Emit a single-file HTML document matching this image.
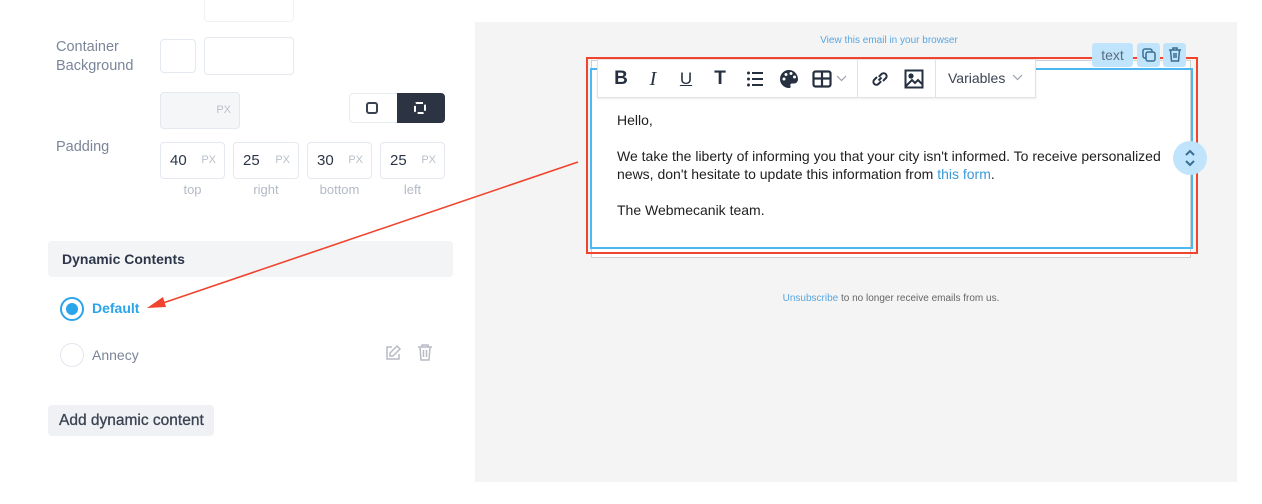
<!DOCTYPE html>
<html><head><meta charset="utf-8">
<style>
*{box-sizing:border-box;margin:0;padding:0}
body{width:1262px;height:504px;background:#fff;position:relative;overflow:hidden;font-family:"Liberation Sans",Arial,sans-serif}
.a{position:absolute}
.lbl{color:#7b8599;font-size:14.5px;line-height:19px}
.inp{position:absolute;border:1px solid #e4e8ef;border-radius:4px;background:#fff}
.px{position:absolute;right:8px;top:11px;font-size:11px;color:#b9bfca}
.val{position:absolute;left:9px;top:9px;font-size:15px;color:#2d3648}
.sub{position:absolute;font-size:13px;color:#b3bac6;text-align:center}
.tb{position:absolute;top:0;height:38px;display:flex;align-items:center;justify-content:center}
</style></head><body>
<div class="inp" style="left:204px;top:-12px;width:90px;height:34px;border-color:#f0f2f5"></div>
<div class="a lbl" style="left:56px;top:38px">Container<br>Background</div>
<div class="inp" style="left:160px;top:39px;width:36px;height:34px"></div>
<div class="inp" style="left:204px;top:37px;width:90px;height:38px"></div>
<div class="inp" style="left:160px;top:92px;width:80px;height:37px;background:#f5f6f8"><span class="px">PX</span></div>
<div class="a" style="left:349px;top:93px;width:96px;height:30px;border:1px solid #e8ebf0;border-radius:4px;background:#fff"></div>
<div class="a" style="left:366px;top:102px;width:12px;height:12px;border:2px solid #3a4352;border-radius:3px"></div>
<div class="a" style="left:397px;top:93px;width:48px;height:30px;background:#2c3443;border-radius:0 4px 4px 0"></div>
<div class="a" style="left:414px;top:102px;width:12px;height:12px;border:2px dashed #fff;border-radius:3px"></div>
<div class="a lbl" style="left:56px;top:138px">Padding</div>
<div class="inp" style="left:160px;top:142px;width:65px;height:37px"><span class="val">40</span><span class="px">PX</span></div>
<div class="inp" style="left:233px;top:142px;width:66px;height:37px"><span class="val">25</span><span class="px">PX</span></div>
<div class="inp" style="left:307px;top:142px;width:65px;height:37px"><span class="val">30</span><span class="px">PX</span></div>
<div class="inp" style="left:380px;top:142px;width:65px;height:37px"><span class="val">25</span><span class="px">PX</span></div>
<div class="sub" style="left:160px;top:182px;width:65px">top</div>
<div class="sub" style="left:233px;top:182px;width:66px">right</div>
<div class="sub" style="left:307px;top:182px;width:65px">bottom</div>
<div class="sub" style="left:380px;top:182px;width:65px">left</div>

<div class="a" style="left:48px;top:241px;width:405px;height:36px;background:#f3f4f6;border-radius:4px"></div>
<div class="a" style="left:62px;top:251px;font-size:14px;font-weight:bold;color:#2d3648">Dynamic Contents</div>
<div class="a" style="left:60px;top:297px;width:24px;height:24px;border:2px solid #2aa4ea;border-radius:50%"></div>
<div class="a" style="left:66px;top:303px;width:12px;height:12px;background:#2aa4ea;border-radius:50%"></div>
<div class="a" style="left:92px;top:300px;font-size:14px;font-weight:bold;color:#2aa4ea">Default</div>
<div class="a" style="left:60px;top:343px;width:24px;height:24px;border:1.5px solid #e2e6ee;border-radius:50%"></div>
<div class="a" style="left:92px;top:347px;font-size:14px;color:#7b8599">Annecy</div>
<svg class="a" style="left:384px;top:344px" width="18" height="18" viewBox="0 0 18 18" fill="none" stroke="#b7bcc5" stroke-width="1.5"><path d="M8 3H3v12h12v-5"/><path d="M13 2l3 3-7 7H6V9z"/></svg>
<svg class="a" style="left:416px;top:343px" width="18" height="19" viewBox="0 0 18 19" fill="none" stroke="#b7bcc5" stroke-width="1.5"><path d="M2 4h14M6 4V2h6v2M4 4l1 13h8l1-13M7.5 7v7M10.5 7v7"/></svg>
<div class="a" style="left:48px;top:405px;width:166px;height:31px;background:#eff1f4;border-radius:4px"></div>
<div class="a" style="left:59px;top:412px;font-size:15.5px;color:#3a4352;-webkit-text-stroke:0.3px #3a4352">Add dynamic content</div>

<div class="a" style="left:475px;top:22px;width:762px;height:460px;background:#f4f4f4"></div>
<div class="a" style="left:475px;top:35px;width:828px;text-align:center;font-size:10px;color:#5aa6e0">View this email in your browser</div>
<div class="a" style="left:591px;top:60px;width:600px;height:198px;border:1px solid #cfcfcf;background:#fff"></div>
<div class="a" style="left:590px;top:68px;width:603px;height:181px;border:2px solid #4cb7f0"></div>
<div class="a" style="left:586px;top:57px;width:612px;height:197px;border:2px solid #f0442e"></div>
<div class="a" style="left:1092px;top:43px;width:41px;height:24px;background:#bfe4fb;border-radius:3px;font-size:14px;color:#5a6d7d;text-align:center;line-height:24px">text</div>
<div class="a" style="left:1137px;top:43px;width:23px;height:24px;background:#bfe4fb;border-radius:3px"></div>
<svg class="a" style="left:1141px;top:47px" width="16" height="16" viewBox="0 0 16 16" fill="none" stroke="#3b6e92" stroke-width="1.5"><rect x="2" y="2" width="9" height="9" rx="2"/><rect x="5" y="5" width="9" height="9" rx="2" fill="#bfe4fb"/></svg>
<div class="a" style="left:1163px;top:43px;width:23px;height:24px;background:#bfe4fb;border-radius:3px"></div>
<svg class="a" style="left:1167px;top:46px" width="16" height="17" viewBox="0 0 16 17" fill="none" stroke="#3b6e92" stroke-width="1.5"><path d="M2 4h12M6 4V2h4v2M3.5 4l1 11h7l1-11M7 7v5M9 7v5"/></svg>
<div class="a" style="left:597px;top:59px;width:439px;height:39px;background:#fff;border:1px solid #e2e2e2;box-shadow:0 1px 2px rgba(0,0,0,.08)">
 <div class="tb" style="left:8px;width:30px;font-size:19px;font-weight:bold;color:#263040">B</div>
 <div class="tb" style="left:40px;width:30px;font-size:20px;font-style:italic;font-family:'Liberation Serif',serif;color:#263040">I</div>
 <div class="tb" style="left:73px;width:30px;font-size:17px;text-decoration:underline;color:#263040">U</div>
 <div class="tb" style="left:107px;width:30px;font-size:19px;font-weight:bold;color:#263040">T</div>
 <svg class="a" style="left:148px;top:10px" width="18" height="18" viewBox="0 0 18 18" fill="#263040"><circle cx="2.5" cy="3" r="1.5"/><circle cx="2.5" cy="9" r="1.5"/><circle cx="2.5" cy="15" r="1.5"/><rect x="6" y="2" width="11" height="2"/><rect x="6" y="8" width="11" height="2"/><rect x="6" y="14" width="11" height="2"/></svg>
 <svg class="a" style="left:181px;top:9px" width="20" height="20" viewBox="0 0 20 20"><path d="M10 1a9 9 0 0 0 0 18c1.5 0 2-1 1.5-2-.6-1.3.2-2.5 1.7-2.5H15a4 4 0 0 0 4-4C19 5 15 1 10 1z" fill="#263040"/><circle cx="5" cy="10" r="1.5" fill="#fff"/><circle cx="7" cy="5.5" r="1.5" fill="#fff"/><circle cx="12" cy="4.5" r="1.5" fill="#fff"/><circle cx="15.5" cy="8" r="1.5" fill="#fff"/></svg>
 <svg class="a" style="left:214px;top:10px" width="20" height="18" viewBox="0 0 20 18" fill="none" stroke="#263040" stroke-width="2.2"><rect x="1.5" y="1.5" width="17" height="15" rx="2"/><path d="M1.5 8.5h17M10 1.5v15"/></svg>
 <svg class="a" style="left:238px;top:15px" width="11" height="7" viewBox="0 0 11 7" fill="none" stroke="#9aa1ab" stroke-width="1.2"><path d="M1 1l4.5 4.5L10 1"/></svg>
 <div class="a" style="left:259px;top:0;width:1px;height:37px;background:#e2e2e2"></div>
 <svg class="a" style="left:272px;top:9px" width="20" height="20" viewBox="0 0 20 20" fill="none" stroke="#263040" stroke-width="2"><path d="M8.5 11.5l3-3M7 8l-3 3a3 3 0 0 0 4.2 4.2l3-3M13 12l3-3a3 3 0 0 0-4.2-4.2l-3 3"/></svg>
 <svg class="a" style="left:306px;top:9px" width="20" height="20" viewBox="0 0 20 20" fill="none" stroke="#263040" stroke-width="2"><rect x="1.5" y="1.5" width="17" height="17"/><path d="M2 17l6-6 3 3 3-3 4 4" /><circle cx="7" cy="7" r="1.6" fill="#263040"/></svg>
 <div class="a" style="left:337px;top:0;width:1px;height:37px;background:#e2e2e2"></div>
 <div class="a" style="left:350px;top:10px;font-size:14px;color:#3a4352">Variables</div>
 <svg class="a" style="left:414px;top:14px" width="11" height="7" viewBox="0 0 11 7" fill="none" stroke="#9aa1ab" stroke-width="1.2"><path d="M1 1l4.5 4.5L10 1"/></svg>
</div>
<div class="a" style="left:617px;top:111px;font-size:14px;line-height:18px;color:#1e1e1e;width:560px">Hello,<br><br>We take the liberty of informing you that your city isn't informed. To receive personalized news, don't hesitate to update this information from <span style="color:#3a9ad9">this form</span>.<br><br>The Webmecanik team.</div>
<div class="a" style="left:1173px;top:141px;width:34px;height:34px;border-radius:50%;background:#bfe4fb"></div>
<svg class="a" style="left:1184px;top:148px" width="12" height="20" viewBox="0 0 12 20" fill="none" stroke="#3b6e92" stroke-width="2"><path d="M2 7l4-4 4 4M2 13l4 4 4-4"/></svg>
<div class="a" style="left:477px;top:293px;width:828px;text-align:center;font-size:10px;color:#666"><span style="color:#5aa6e0">Unsubscribe</span> to no longer receive emails from us.</div>
<svg class="a" style="left:0;top:0" width="1262" height="504"><line x1="578" y1="162" x2="160" y2="304" stroke="#f0442e" stroke-width="1.6"/><path d="M147 308l16-11 3 10z" fill="#f0442e"/></svg>
</body></html>
